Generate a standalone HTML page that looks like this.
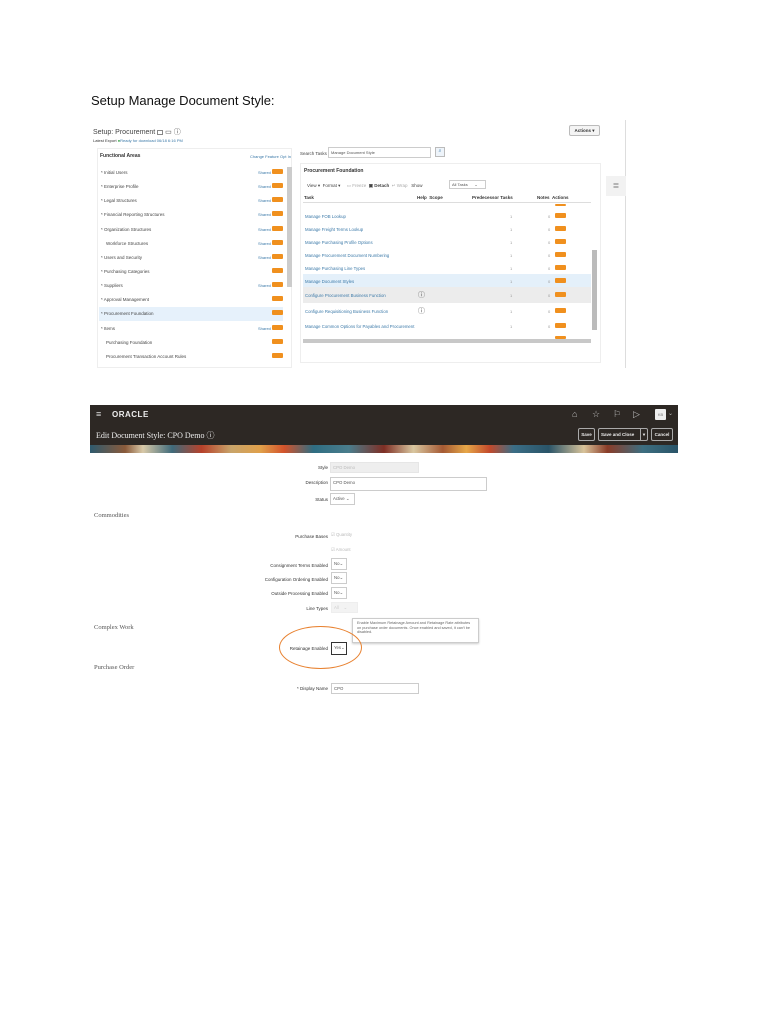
<!DOCTYPE html>
<html><head><meta charset="utf-8">
<style>
*{margin:0;padding:0;box-sizing:border-box}
body{width:768px;height:1024px;background:#fff;position:relative;overflow:hidden;font-family:"Liberation Sans",sans-serif;color:#333}
.a{position:absolute;white-space:nowrap}
.t{font-size:4.5px;color:#444}
.lk{font-size:4.3px;color:#3b79a8}
.ob{position:absolute;width:11px;height:5px;background:#f0901e;border-radius:1px}
.sh{font-size:4px;color:#3b79a8}
.n1{position:absolute;font-size:4px;color:#999}
.lab{position:absolute;font-size:4.5px;color:#333;text-align:right;width:140px}
.inp{position:absolute;border:1px solid #ccc;background:#fff;font-size:4.3px;color:#555;padding:1px 2px;line-height:7px}
.sec{position:absolute;font-size:6.5px;color:#555;font-family:"Liberation Serif",serif}
.btn{position:absolute;top:428px;height:13px;border:1px solid #aaa;border-radius:2px;color:#eee;font-size:4.5px;font-weight:bold;text-align:center;line-height:11px}
.ic{position:absolute;top:409px;font-size:9px;color:#bbb}
</style></head><body>
<div class="a" style="left:91px;top:93px;font-size:13px;color:#111">Setup Manage Document Style:</div>

<!-- screenshot 1 -->
<div class="a" style="left:625px;top:120px;width:1px;height:248px;background:#ddd"></div>
<div class="a" style="left:93px;top:127px;font-size:7px;color:#444">Setup: Procurement <span style="display:inline-block;width:6px;height:5px;border:1px solid #888;vertical-align:middle"></span> ▭ ⓘ</div>
<div class="a" style="left:93px;top:138px;font-size:4px;color:#333">Latest Export <span style="color:#2a9d3c">●</span><span style="color:#3b79a8">Ready for download 06/18 6:16 PM</span></div>
<div class="a" style="left:569px;top:125px;width:31px;height:11px;border:1px solid #bbb;border-radius:2px;background:#f4f4f4;font-size:4.5px;text-align:center;line-height:9px;font-weight:bold">Actions ▾</div>
<div class="a" style="left:606px;top:176px;width:20px;height:20px;background:#f2f2f2;font-size:8px;color:#777;text-align:center;line-height:20px">≣</div>
<!-- left panel -->
<div class="a" style="left:97px;top:148px;width:195px;height:220px;border:1px solid #eee"></div>
<div class="a" style="left:100px;top:153px;font-size:5px;font-weight:bold;color:#333">Functional Areas</div>
<div class="a lk" style="left:250px;top:154px;font-size:4px">Change Feature Opt In</div>
<div class="a" style="left:287px;top:167px;width:5px;height:120px;background:#ccc"></div>
<div class="a" style="left:99px;top:307px;width:184px;height:14px;background:#e6f1fb"></div>
<div class="a t" style="left:101px;top:170px">* Initial Users</div><div class="a sh" style="left:258px;top:170px">Shared</div><div class="ob" style="left:272px;top:169px"></div>
<div class="a t" style="left:101px;top:184px">* Enterprise Profile</div><div class="a sh" style="left:258px;top:184px">Shared</div><div class="ob" style="left:272px;top:183px"></div>
<div class="a t" style="left:101px;top:198px">* Legal Structures</div><div class="a sh" style="left:258px;top:198px">Shared</div><div class="ob" style="left:272px;top:197px"></div>
<div class="a t" style="left:101px;top:212px">* Financial Reporting Structures</div><div class="a sh" style="left:258px;top:212px">Shared</div><div class="ob" style="left:272px;top:211px"></div>
<div class="a t" style="left:101px;top:227px">* Organization Structures</div><div class="a sh" style="left:258px;top:227px">Shared</div><div class="ob" style="left:272px;top:226px"></div>
<div class="a t" style="left:106px;top:241px">Workforce Structures</div><div class="a sh" style="left:258px;top:241px">Shared</div><div class="ob" style="left:272px;top:240px"></div>
<div class="a t" style="left:101px;top:255px">* Users and Security</div><div class="a sh" style="left:258px;top:255px">Shared</div><div class="ob" style="left:272px;top:254px"></div>
<div class="a t" style="left:101px;top:269px">* Purchasing Categories</div><div class="ob" style="left:272px;top:268px"></div>
<div class="a t" style="left:101px;top:283px">* Suppliers</div><div class="a sh" style="left:258px;top:283px">Shared</div><div class="ob" style="left:272px;top:282px"></div>
<div class="a t" style="left:101px;top:297px">* Approval Management</div><div class="ob" style="left:272px;top:296px"></div>
<div class="a t" style="left:101px;top:311px">* Procurement Foundation</div><div class="ob" style="left:272px;top:310px"></div>
<div class="a t" style="left:101px;top:326px">* Items</div><div class="a sh" style="left:258px;top:326px">Shared</div><div class="ob" style="left:272px;top:325px"></div>
<div class="a t" style="left:106px;top:340px">Purchasing Foundation</div><div class="ob" style="left:272px;top:339px"></div>
<div class="a t" style="left:106px;top:354px">Procurement Transaction Account Rules</div><div class="ob" style="left:272px;top:353px"></div>
<!-- right -->
<div class="a t" style="left:300px;top:151px">Search Tasks</div>
<div class="a inp" style="left:328px;top:147px;width:103px;height:11px;font-size:4px">Manage Document Style</div>
<div class="a" style="left:435px;top:147px;width:10px;height:10px;border:1px solid #bbb;background:#eef4fa;font-size:5px;text-align:center;color:#3b79a8">⌕</div>
<div class="a" style="left:300px;top:163px;width:301px;height:200px;border:1px solid #eee"></div>
<div class="a" style="left:304px;top:168px;font-size:5px;font-weight:bold;color:#333">Procurement Foundation</div>
<div class="a t" style="left:307px;top:183px">View ▾ &nbsp;Format ▾ &nbsp;&nbsp;&nbsp;&nbsp;<span style="color:#aaa">▭ Freeze</span> &nbsp;<b>▣ Detach</b> &nbsp;<span style="color:#aaa">↵ Wrap</span> &nbsp;&nbsp;Show</div>
<div class="a inp" style="left:449px;top:180px;width:37px;height:9px;font-size:4px;line-height:5px">All Tasks &nbsp;&nbsp;&nbsp;&nbsp;&nbsp;⌄</div>
<div class="a" style="left:304px;top:195px;font-size:4.5px;font-weight:bold;color:#333">Task</div>
<div class="a" style="left:417px;top:195px;font-size:4.5px;font-weight:bold;color:#333">Help &nbsp;Scope</div>
<div class="a" style="left:472px;top:195px;font-size:4.5px;font-weight:bold;color:#333">Predecessor Tasks</div>
<div class="a" style="left:537px;top:195px;font-size:4.5px;font-weight:bold;color:#333">Notes &nbsp;Actions</div>
<div class="a" style="left:303px;top:202px;width:288px;height:1px;background:#ddd"></div>
<div class="a" style="left:303px;top:274px;width:288px;height:13px;background:#e4f0fa"></div>
<div class="a" style="left:303px;top:287px;width:288px;height:16px;background:#ececec"></div>
<div class="a" style="left:592px;top:250px;width:5px;height:80px;background:#bbb"></div>
<div class="a" style="left:303px;top:339px;width:288px;height:4px;background:#c8c8c8"></div>
<div class="ob" style="left:555px;top:204px;height:2px"></div>
<div class="a lk" style="left:305px;top:214px">Manage FOB Lookup</div><div class="n1" style="left:510px;top:214px">1</div><div class="n1" style="left:548px;top:214px">0</div><div class="ob" style="left:555px;top:213px"></div>
<div class="a lk" style="left:305px;top:227px">Manage Freight Terms Lookup</div><div class="n1" style="left:510px;top:227px">1</div><div class="n1" style="left:548px;top:227px">0</div><div class="ob" style="left:555px;top:226px"></div>
<div class="a lk" style="left:305px;top:240px">Manage Purchasing Profile Options</div><div class="n1" style="left:510px;top:240px">1</div><div class="n1" style="left:548px;top:240px">0</div><div class="ob" style="left:555px;top:239px"></div>
<div class="a lk" style="left:305px;top:253px">Manage Procurement Document Numbering</div><div class="n1" style="left:510px;top:253px">1</div><div class="n1" style="left:548px;top:253px">0</div><div class="ob" style="left:555px;top:252px"></div>
<div class="a lk" style="left:305px;top:266px">Manage Purchasing Line Types</div><div class="n1" style="left:510px;top:266px">1</div><div class="n1" style="left:548px;top:266px">0</div><div class="ob" style="left:555px;top:265px"></div>
<div class="a lk" style="left:305px;top:279px">Manage Document Styles</div><div class="n1" style="left:510px;top:279px">1</div><div class="n1" style="left:548px;top:279px">0</div><div class="ob" style="left:555px;top:278px"></div>
<div class="a lk" style="left:305px;top:293px">Configure Procurement Business Function</div><div class="a" style="left:418px;top:290px;font-size:7px;color:#555">ⓘ</div><div class="n1" style="left:510px;top:293px">1</div><div class="n1" style="left:548px;top:293px">0</div><div class="ob" style="left:555px;top:292px"></div>
<div class="a lk" style="left:305px;top:309px">Configure Requisitioning Business Function</div><div class="a" style="left:418px;top:306px;font-size:7px;color:#555">ⓘ</div><div class="n1" style="left:510px;top:309px">1</div><div class="n1" style="left:548px;top:309px">0</div><div class="ob" style="left:555px;top:308px"></div>
<div class="a lk" style="left:305px;top:324px">Manage Common Options for Payables and Procurement</div><div class="n1" style="left:510px;top:324px">1</div><div class="n1" style="left:548px;top:324px">0</div><div class="ob" style="left:555px;top:323px"></div>
<div class="ob" style="left:555px;top:336px;height:3px"></div>

<!-- screenshot 2 -->
<div class="a" style="left:90px;top:405px;width:588px;height:40px;background:#2d2824"></div>
<div class="a" style="left:90px;top:445px;width:588px;height:8px;background:linear-gradient(90deg,#2e5a6e 0%,#8a5a3a 6%,#d8c9a8 9%,#3f6a7a 14%,#b7412a 19%,#c8a46a 24%,#e0a04a 29%,#d3532b 33%,#2f6d82 38%,#4a7d8c 44%,#7e2e24 50%,#d9c7a0 55%,#a55a34 60%,#e6a748 64%,#c2492b 68%,#3b6e86 72%,#2a5468 78%,#d8c39a 84%,#8a3c28 88%,#3d6e80 94%,#2a5468 100%)"></div>
<div class="a" style="left:96px;top:409px;font-size:9px;color:#ddd">≡</div>
<div class="a" style="left:112px;top:410px;font-size:8px;color:#eee;font-weight:bold;letter-spacing:0.5px">ORACLE</div>
<div class="a" style="left:96px;top:430px;font-size:8px;color:#eee;font-family:'Liberation Serif',serif">Edit Document Style: CPO Demo ⓘ</div>
<div class="ic" style="left:572px">⌂</div>
<div class="ic" style="left:592px">☆</div>
<div class="ic" style="left:613px">⚐</div>
<div class="ic" style="left:633px">▷</div>
<div class="a" style="left:655px;top:409px;width:11px;height:11px;background:#eee;border-radius:1px;font-size:4px;color:#777;text-align:center;line-height:11px">KB</div>
<div class="a" style="left:668px;top:410px;font-size:6px;color:#bbb">⌄</div>
<div class="btn" style="left:578px;width:17px">Save</div>
<div class="btn" style="left:598px;width:50px;text-align:left;padding-left:2px">Save and Close<span style="position:absolute;right:0;top:0;width:7px;height:11px;border-left:1px solid #aaa;text-align:center">▾</span></div>
<div class="btn" style="left:651px;width:22px">Cancel</div>

<div class="lab" style="left:188px;top:465px">Style</div>
<div class="inp" style="left:330px;top:462px;width:89px;height:11px;background:#eee;border-color:#e6e6e6;color:#bbb">CPO Demo</div>
<div class="lab" style="left:188px;top:480px">Description</div>
<div class="inp" style="left:330px;top:477px;width:157px;height:14px">CPO Demo</div>
<div class="lab" style="left:188px;top:497px">Status</div>
<div class="inp" style="left:330px;top:493px;width:25px;height:12px">Active ⌄</div>
<div class="sec" style="left:94px;top:512px">Commodities</div>
<div class="lab" style="left:188px;top:534px">Purchase Bases</div>
<div class="a" style="left:331px;top:532px;font-size:4.3px;color:#bbb">☑ Quantity</div>
<div class="a" style="left:331px;top:547px;font-size:4.3px;color:#bbb">☑ Amount</div>
<div class="lab" style="left:188px;top:563px">Consignment Terms Enabled</div>
<div class="inp" style="left:331px;top:558px;width:16px;height:12px">No⌄</div>
<div class="lab" style="left:188px;top:577px">Configuration Ordering Enabled</div>
<div class="inp" style="left:331px;top:572px;width:16px;height:12px">No⌄</div>
<div class="lab" style="left:188px;top:591px">Outside Processing Enabled</div>
<div class="inp" style="left:331px;top:587px;width:16px;height:12px">No⌄</div>
<div class="lab" style="left:188px;top:606px">Line Types</div>
<div class="inp" style="left:331px;top:602px;width:27px;height:11px;background:#f3f3f3;border-color:#eee;color:#ccc">All &nbsp;&nbsp;&nbsp;⌄</div>
<div class="sec" style="left:94px;top:624px">Complex Work</div>
<div class="a" style="left:352px;top:618px;width:127px;height:25px;border:1px solid #ccc;box-shadow:0 1px 2px #ccc;background:#fff;font-size:3.8px;color:#666;padding:2px 4px;white-space:normal;line-height:4.6px">Enable Maximum Retainage Amount and Retainage Rate attributes on purchase order documents. Once enabled and saved, it can't be disabled.</div>
<div class="lab" style="left:188px;top:646px">Retainage Enabled</div>
<div class="inp" style="left:331px;top:642px;width:16px;height:13px;border:1px solid #333">Yes⌄</div>
<div class="a" style="left:279px;top:626px;width:83px;height:43px;border:1.5px solid #e8812f;border-radius:50%"></div>
<div class="sec" style="left:94px;top:664px">Purchase Order</div>
<div class="lab" style="left:188px;top:686px"><span style="color:#333">*</span> Display Name</div>
<div class="inp" style="left:331px;top:683px;width:88px;height:11px">CPO</div>
</body></html>
